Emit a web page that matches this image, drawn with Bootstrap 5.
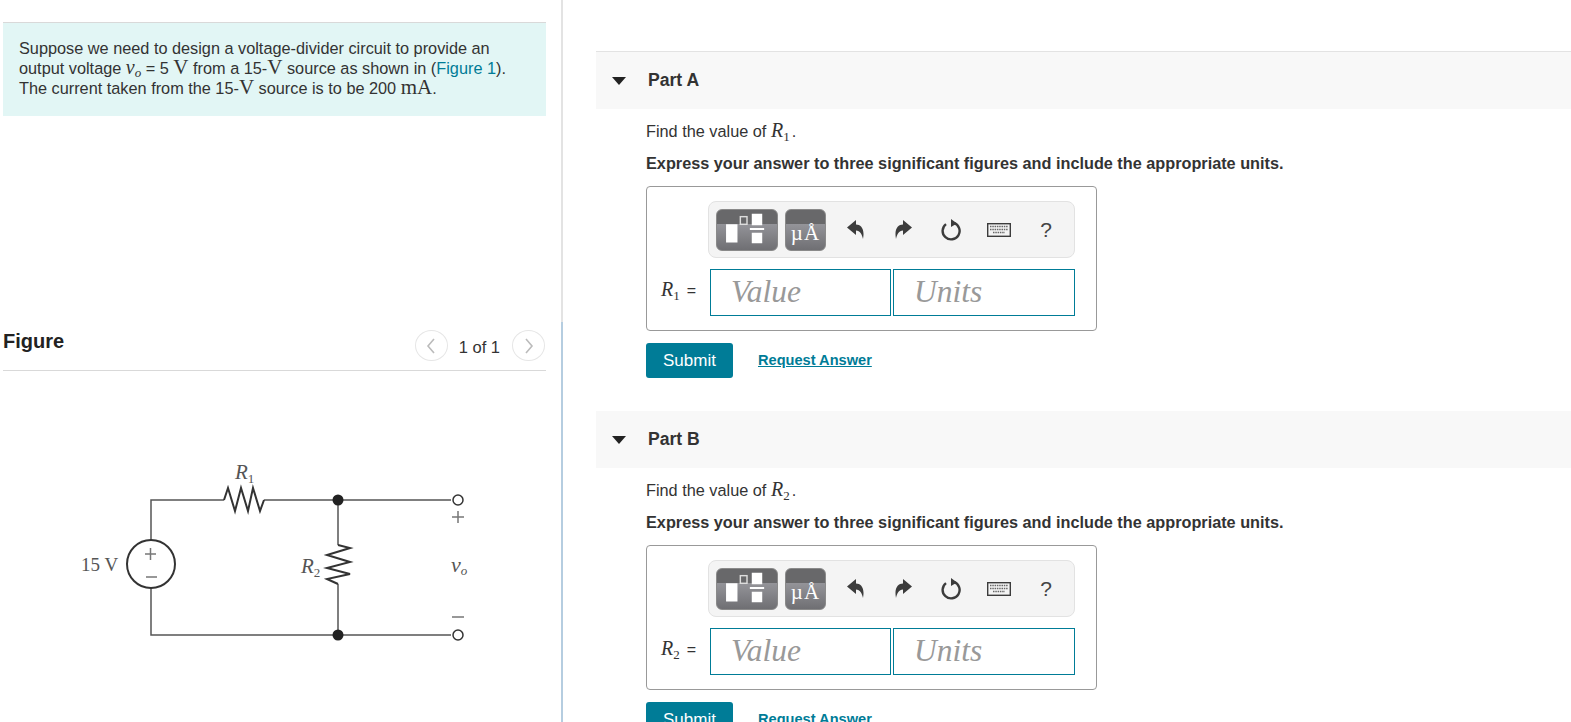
<!DOCTYPE html>
<html lang="en">
<head>
  <meta charset="UTF-8">
  <meta name="viewport" content="width=device-width, initial-scale=1">
  <title>Voltage divider</title>
  <link href="https://cdn.jsdelivr.net/npm/bootstrap@5.3.0/dist/css/bootstrap.min.css" rel="stylesheet">
  <style>
    html, body { height: 722px; overflow: hidden; }
    body { font-family: "Liberation Sans", Arial, sans-serif; color: #333; background: #fff; font-size: 16.3px; }
    .math { font-family: "Liberation Serif", serif; font-size: 21px; line-height: 0; }
    .math-i { font-family: "Liberation Serif", serif; font-style: italic; font-size: 20px; line-height: 0; }
    .math-i sub { font-style: italic; font-size: 13px; bottom: -.2em; line-height: 0; }
    .math-n { font-family: "Liberation Serif", serif; font-size: 13px; line-height: 0; position: relative; top: 4px; margin-right: 2px; }
    a.plain-link { color: #007c97; text-decoration: none; }

    .left-pane { width: 563px; flex: none; }
    .left-top { height: 322px; padding: 22px 15px 0 3px; border-right: 2px solid #e3e3e3; }
    .left-bottom { height: 400px; padding: 0 15px 0 3px; border-right: 2px solid #b5cde0; }
    .intro-box { height: 94px; background: #e2f6f5; border-top: 1px solid #d9d9d9; padding: 15px 16px; line-height: 20px; }
    .fig-head { height: 49px; border-bottom: 1px solid #d9d9d9; padding-right: 1px; }
    .fig-title { font-size: 20px; font-weight: 700; color: #222; line-height: 38px; }
    .pager-btn { width: 33px; height: 31px; border: 1px solid #e6e6e6; border-radius: 50%; background: #fff; padding: 0; }
    .pager-text { font-size: 16.5px; margin: 3px 12px 0 11px; }
    .circuit { display: block; margin: 80px 0 0 67px; }
    .circuit text { font-family: "Liberation Serif", serif; fill: #555; }

    .right-pane { padding: 51px 0 0 33px; }
    .part { height: 360px; }
    .part-head { height: 58px; background: #f8f8f8; border-top: 1px solid #e3e3e3; padding-left: 16px; }
    .part-nob { height: 57px; border-top: 0; }
    .caret-down { width: 0; height: 0; border-left: 7px solid transparent; border-right: 7px solid transparent; border-top: 8px solid #222; margin-right: 22px; }
    .part-title { font-weight: 700; font-size: 17.6px; color: #333; }
    .part-body { padding: 10px 0 0 50px; }
    .q-line { line-height: 24px; margin: 0 0 8px; }
    .q-bold { font-weight: 700; line-height: 24px; margin: 0 0 11px; font-size: 16.25px; }
    .answer-box { width: 451px; height: 145px; border: 1px solid #999; border-radius: 4px; padding: 14px 21px 14px 14px; }
    .tool-strip { width: 367px; height: 57px; background: #f4f4f4; border: 1px solid #e2e2e2; border-radius: 8px; padding: 6px 0 6px 7px; }
    .tpl-btn { height: 42px; border-radius: 6px; border: 1px solid #8a8a8a; padding: 0; background: linear-gradient(#68686a 0, #68686a 14px, #949499 14px, #6f6f73 100%); display: block; flex: none; }
    .tpl-frac { margin-right: 7px; }
    .tpl-unit { width: 41px; margin-right: 6px; }
    .unit-glyph { font-family: "Liberation Serif", serif; color: #fff; font-size: 21px; line-height: 28px; letter-spacing: 1px; padding-bottom: 3px; }
    .tool-icon { width: 47.6px; flex: none; display: flex; justify-content: center; align-items: center; }
    .help-mark { font-size: 21px; color: #444; line-height: 1; }
    .eq-label { width: 49px; padding-bottom: 3px; font-size: 16px; white-space: nowrap; margin-right: 0; }
    .eq-label .math-i { font-size: 20px; }
    .eq-label .math-n { margin-right: 7px; }
    .ans-input { height: 47px; border: 1px solid #007c97; border-radius: 0; padding: 0 20px 2px; font-family: "Liberation Serif", serif; font-style: italic; font-size: 31.500px; box-shadow: none; }
    .ans-input::placeholder { color: #999; opacity: 1; }
    .submit-btn { background: #007c97; color: #fff; border: 0; border-radius: 3px; width: 87px; height: 35px; font-size: 17px; padding: 0; }
    .req-link { color: #007c97; font-weight: 700; font-size: 14.6px; text-decoration: underline; margin-left: 25px; }
  </style>
</head>
<body>
  <div class="d-flex">
    <div class="left-pane">
      <div class="left-top">
        <div class="intro-box">
          Suppose we need to design a voltage-divider circuit to provide an output voltage <span class="math-i">v<sub>o</sub></span> = 5 <span class="math">V</span> from a 15-<span class="math">V</span> source as shown in (<a class="plain-link" href="#">Figure 1</a>). The current taken from the 15-<span class="math">V</span> source is to be 200 <span class="math">mA</span>.
        </div>
      </div>
      <div class="left-bottom">
        <div class="fig-head d-flex justify-content-between align-items-start">
          <div class="fig-title">Figure</div>
          <div class="d-flex align-items-center pt-2">
            <button class="pager-btn d-flex align-items-center justify-content-center" aria-label="Previous">
              <svg width="10" height="18" viewBox="0 0 10 18"><path d="M8 2 2 9l6 7" fill="none" stroke="#bbb" stroke-width="1.6"/></svg>
            </button>
            <span class="pager-text">1 of 1</span>
            <button class="pager-btn d-flex align-items-center justify-content-center" aria-label="Next">
              <svg width="10" height="18" viewBox="0 0 10 18"><path d="M2 2l6 7-6 7" fill="none" stroke="#bbb" stroke-width="1.6"/></svg>
            </button>
          </div>
        </div>
        <svg class="circuit" width="420" height="200" viewBox="0 0 420 200">
          <g fill="none" stroke="#555" stroke-width="1.5">
            <path d="M81 89V49H154M194 49H381"/>
            <path d="M81 137V184H381"/>
            <path d="M268 49V94M268 133V184"/>
            <path d="M154 49 158 37 165 60 171 37 178 60 183 37 190 60 194 49" stroke="#333" stroke-width="2"/>
            <path d="M268 94 280 97 257 104 280 111 257 117 280 123 257 128 268 133" stroke="#333" stroke-width="2"/>
            <circle cx="81" cy="113" r="24" stroke="#333" stroke-width="2"/>
            <circle cx="388" cy="49" r="5" fill="#fff" stroke="#333"/>
            <circle cx="388" cy="184" r="5" fill="#fff" stroke="#333"/>
            <path d="M75 103H86M80.500 97V109M76 126H87M382 66H394M388 60V72M382 166H394" stroke="#777"/>
          </g>
          <circle cx="268" cy="49" r="5.500" fill="#222"/>
          <circle cx="268" cy="184" r="5.500" fill="#222"/>
          <text x="11" y="120" font-size="19">15 V</text>
          <text x="165" y="28" font-size="21" font-style="italic">R<tspan font-size="13" dy="4" font-style="normal">1</tspan></text>
          <text x="231" y="122" font-size="21" font-style="italic">R<tspan font-size="13" dy="4" font-style="normal">2</tspan></text>
          <text x="381" y="121" font-size="22" font-style="italic">v<tspan font-size="13" dy="3">o</tspan></text>
        </svg>
      </div>
    </div>

    <div class="right-pane flex-grow-1">
      <div class="part">
        <div class="part-head d-flex align-items-center">
          <span class="caret-down"></span><span class="part-title">Part A</span>
        </div>
        <div class="part-body">
          <p class="q-line">Find the value of <span class="math-i">R</span><span class="math-n">1</span>.</p>
          <p class="q-bold">Express your answer to three significant figures and include the appropriate units.</p>
          <div class="answer-box d-flex flex-column align-items-end">
            <div class="tool-strip d-flex align-items-center">
              <svg class="tpl-btn tpl-frac" width="62" height="42" viewBox="0 0 62 42"><path d="M9 15H21V34H9zM36 4H47V16H36zM36 24H47V35H36z" fill="#fff"/><path d="M34 20H49" stroke="#fff" stroke-width="2"/><rect x="24" y="7" width="7" height="8" fill="none" stroke="#ddd" stroke-width="1.500"/></svg>
              <div class="tpl-btn tpl-unit d-flex align-items-end justify-content-center"><span class="unit-glyph">µÅ</span></div>
              <div class="tool-icon"><svg width="17" height="19" viewBox="0 0 17 19"><path d="M0 7.500 9 0V4.500C14 4.500 18 9 16 19 15 14 13 11 9 10.500V15Z" fill="#3c3c3c"/></svg></div>
              <div class="tool-icon"><svg width="17" height="19" viewBox="0 0 17 19"><path d="M17 7.500 8 0V4.500C3 4.500-1 9 1 19 2 14 4 11 8 10.500V15Z" fill="#3c3c3c"/></svg></div>
              <div class="tool-icon"><svg width="20" height="22" viewBox="0 0 20 22"><path d="M13 3.900A8.500 8.500 0 1 1 5 5.100" fill="none" stroke="#3c3c3c" stroke-width="2.400"/><path d="M10 0 16 4.500 10 8Z" fill="#3c3c3c"/></svg></div>
              <div class="tool-icon"><svg width="24" height="14" viewBox="0 0 24 14"><rect x=".7" y=".7" width="22.600" height="12.600" fill="#f4f4f4" stroke="#3c3c3c" stroke-width="1.400"/><path d="M3 3.500H21M3 6.500H21M6 9.500H18" stroke="#666" stroke-width="1.500" stroke-dasharray="1.500 .8"/></svg></div>
              <div class="tool-icon"><span class="help-mark">?</span></div>
            </div>
            <div class="d-flex align-items-center mt-auto">
              <div class="eq-label"><span class="math-i">R</span><span class="math-n">1</span>=</div>
              <input class="ans-input form-control" style="width:181px" placeholder="Value" aria-label="Value">
              <input class="ans-input form-control" style="width:182px;margin-left:2px" placeholder="Units" aria-label="Units">
            </div>
          </div>
          <div class="d-flex align-items-center mt-2 pt-1">
            <button class="submit-btn">Submit</button>
            <a class="req-link" href="#">Request Answer</a>
          </div>
        </div>
      </div>
      <div class="part">
        <div class="part-head part-nob d-flex align-items-center">
          <span class="caret-down"></span><span class="part-title">Part B</span>
        </div>
        <div class="part-body">
          <p class="q-line">Find the value of <span class="math-i">R</span><span class="math-n">2</span>.</p>
          <p class="q-bold">Express your answer to three significant figures and include the appropriate units.</p>
          <div class="answer-box d-flex flex-column align-items-end">
            <div class="tool-strip d-flex align-items-center">
              <svg class="tpl-btn tpl-frac" width="62" height="42" viewBox="0 0 62 42"><path d="M9 15H21V34H9zM36 4H47V16H36zM36 24H47V35H36z" fill="#fff"/><path d="M34 20H49" stroke="#fff" stroke-width="2"/><rect x="24" y="7" width="7" height="8" fill="none" stroke="#ddd" stroke-width="1.500"/></svg>
              <div class="tpl-btn tpl-unit d-flex align-items-end justify-content-center"><span class="unit-glyph">µÅ</span></div>
              <div class="tool-icon"><svg width="17" height="19" viewBox="0 0 17 19"><path d="M0 7.500 9 0V4.500C14 4.500 18 9 16 19 15 14 13 11 9 10.500V15Z" fill="#3c3c3c"/></svg></div>
              <div class="tool-icon"><svg width="17" height="19" viewBox="0 0 17 19"><path d="M17 7.500 8 0V4.500C3 4.500-1 9 1 19 2 14 4 11 8 10.500V15Z" fill="#3c3c3c"/></svg></div>
              <div class="tool-icon"><svg width="20" height="22" viewBox="0 0 20 22"><path d="M13 3.900A8.500 8.500 0 1 1 5 5.100" fill="none" stroke="#3c3c3c" stroke-width="2.400"/><path d="M10 0 16 4.500 10 8Z" fill="#3c3c3c"/></svg></div>
              <div class="tool-icon"><svg width="24" height="14" viewBox="0 0 24 14"><rect x=".7" y=".7" width="22.600" height="12.600" fill="#f4f4f4" stroke="#3c3c3c" stroke-width="1.400"/><path d="M3 3.500H21M3 6.500H21M6 9.500H18" stroke="#666" stroke-width="1.500" stroke-dasharray="1.500 .8"/></svg></div>
              <div class="tool-icon"><span class="help-mark">?</span></div>
            </div>
            <div class="d-flex align-items-center mt-auto">
              <div class="eq-label"><span class="math-i">R</span><span class="math-n">2</span>=</div>
              <input class="ans-input form-control" style="width:181px" placeholder="Value" aria-label="Value">
              <input class="ans-input form-control" style="width:182px;margin-left:2px" placeholder="Units" aria-label="Units">
            </div>
          </div>
          <div class="d-flex align-items-center mt-2 pt-1">
            <button class="submit-btn">Submit</button>
            <a class="req-link" href="#">Request Answer</a>
          </div>
        </div>
      </div>
    </div>
  </div>
  <script src="https://cdn.jsdelivr.net/npm/bootstrap@5.3.0/dist/js/bootstrap.bundle.min.js"></script>
</body>
</html>
